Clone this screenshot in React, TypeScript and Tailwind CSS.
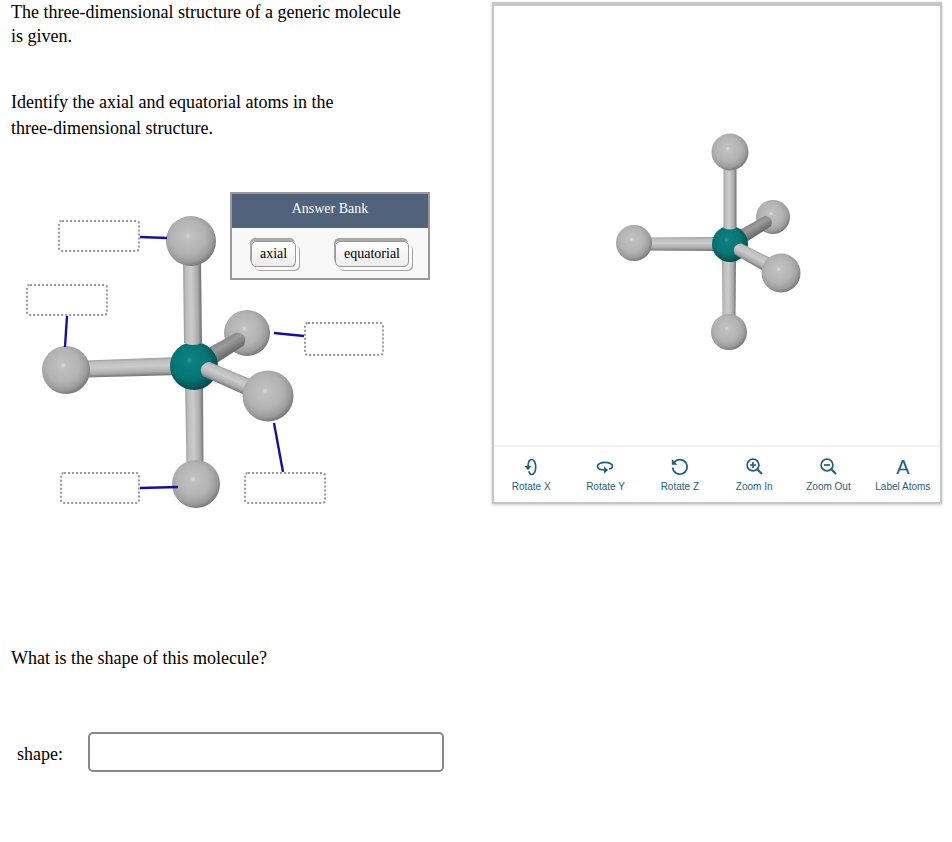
import React from "react";

type Point = [number, number];

function Gradients() {
  return (
    <svg width="0" height="0" className="absolute" aria-hidden="true">
      <defs>
        <radialGradient id="atom" cx="0.44" cy="0.42" r="0.62" fx="0.44" fy="0.4">
          <stop offset="0" stopColor="#dedede" />
          <stop offset="0.1" stopColor="#c0c0c0" />
          <stop offset="0.55" stopColor="#b3b3b3" />
          <stop offset="0.8" stopColor="#9c9c9c" />
          <stop offset="1" stopColor="#6c6c6c" />
        </radialGradient>
        <radialGradient id="core" cx="0.44" cy="0.42" r="0.62" fx="0.4" fy="0.38">
          <stop offset="0" stopColor="#2f9c9c" />
          <stop offset="0.12" stopColor="#0b8080" />
          <stop offset="0.6" stopColor="#067474" />
          <stop offset="1" stopColor="#034747" />
        </radialGradient>
        <linearGradient id="bond" x1="0" y1="0" x2="0" y2="1">
          <stop offset="0" stopColor="#9a9a9a" />
          <stop offset="0.15" stopColor="#bebebe" />
          <stop offset="0.45" stopColor="#cbcbcb" />
          <stop offset="0.78" stopColor="#ababab" />
          <stop offset="1" stopColor="#707070" />
        </linearGradient>
        <linearGradient id="bondDark" x1="0" y1="0" x2="0" y2="1">
          <stop offset="0" stopColor="#858585" />
          <stop offset="0.35" stopColor="#9c9c9c" />
          <stop offset="1" stopColor="#626262" />
        </linearGradient>
      </defs>
    </svg>
  );
}

function Atom({ at, r, core }: { at: Point; r: number; core?: boolean }) {
  return <circle cx={at[0]} cy={at[1]} r={r} fill={core ? "url(#core)" : "url(#atom)"} />;
}

function Bond({ from, to, w1, w2, dark, cap = 0 }: { from: Point; to: Point; w1: number; w2: number; dark?: boolean; cap?: number }) {
  const dx = to[0] - from[0];
  const dy = to[1] - from[1];
  const len = Math.hypot(dx, dy);
  const angle = (Math.atan2(dy, dx) * 180) / Math.PI;
  const a = w1 / 2;
  const b = w2 / 2;
  return (
    <path
      transform={`translate(${from[0]} ${from[1]}) rotate(${angle})`}
      d={`M0 ${-a} L${len} ${-b} Q${len + cap} 0 ${len} ${b} L0 ${a} Q${-cap} 0 0 ${-a}Z`}
      fill={dark ? "url(#bondDark)" : "url(#bond)"}
    />
  );
}

function LabelledMolecule() {
  return (
    <svg width="440" height="340" viewBox="0 180 440 340" className="absolute left-0 top-0" role="img" aria-label="Molecule with five outer atoms">
      <Atom at={[247, 333]} r={23} />
      <Bond from={[200, 363]} to={[240, 339]} w1={18} w2={15} dark cap={10} />
      <Bond from={[86, 369]} to={[180, 366]} w1={17} w2={18} />
      <Bond from={[195, 466]} to={[194, 380]} w1={17} w2={18} />
      <Atom at={[194, 366]} r={24} core />
      <Bond from={[193, 343]} to={[192, 260]} w1={18} w2={18} cap={4} />
      <Atom at={[191, 241]} r={25} />
      <Atom at={[66, 370]} r={24} />
      <Atom at={[196, 484]} r={24} />
      <Bond from={[206, 369]} to={[250, 388]} w1={16} w2={17} cap={10} />
      <Atom at={[268, 396]} r={25.5} />
      <g stroke="#160fa6" strokeWidth="2.4">
        <path d="M140 237L167 238" />
        <path d="M67 316L65 347" />
        <path d="M274 333L304 336" />
        <path d="M140 488L178 487" />
        <path d="M274 423L283 472" />
      </g>
    </svg>
  );
}

function ViewerMolecule() {
  return (
    <svg viewBox="494 6 446 439" className="h-[439px] w-full" role="img" aria-label="Rotatable molecule model">
      <Atom at={[773, 217]} r={17} />
      <Bond from={[738, 239]} to={[768, 221]} w1={14} w2={12} dark cap={7} />
      <Bond from={[648, 244]} to={[715, 244]} w1={13} w2={14} />
      <Bond from={[729, 318]} to={[729, 258]} w1={13} w2={14} />
      <Atom at={[730, 244]} r={18} core />
      <Bond from={[730, 228]} to={[730, 165]} w1={13} w2={13} cap={3} />
      <Atom at={[730, 152]} r={18.5} />
      <Atom at={[634, 243]} r={18} />
      <Atom at={[729, 332]} r={18} />
      <Bond from={[738, 249]} to={[768, 265]} w1={13} w2={15} cap={8} />
      <Atom at={[781, 273]} r={19.5} />
    </svg>
  );
}

function Slot({ place, label }: { place: string; label: string }) {
  return <button type="button" aria-label={label} className={`absolute rounded border-2 border-dotted border-[#999] bg-white ${place}`} />;
}

function Tile({ children }: { children: React.ReactNode }) {
  return (
    <button
      type="button"
      className="h-[26px] rounded-[5px] border border-[#999] bg-linear-to-b from-white to-[#ececec] px-2 text-sm leading-5 shadow-[3px_3px_0_0_#fafafa,4px_4px_0_0_#a5a5a5,-1px_-3px_0_0_#a9a9a9]"
    >
      {children}
    </button>
  );
}

function RotateY({ className = "" }: { className?: string }) {
  return (
    <svg width="20" height="20" viewBox="0 0 20 20" className={className} fill="none" stroke="currentColor" strokeWidth="1.7" aria-hidden="true">
      <path d="M14.2 12.2C16.3 11.5 17.5 10.4 17.5 9.2C17.5 7 14.2 5.3 10 5.3S2.5 7 2.5 9.2C2.5 11.4 5.6 13 10 13" />
      <path d="M9 9.4L13.2 13L9 16.4Z" fill="currentColor" stroke="none" />
    </svg>
  );
}

function RotateZ() {
  return (
    <svg width="20" height="20" viewBox="0 0 20 20" fill="none" stroke="currentColor" strokeWidth="1.7" aria-hidden="true">
      <path d="M2.6 10.5a7.3 7.3 0 1 0 2.1-5.8L3.2 6.2" />
      <path d="M1.8 2v5.8h5.8Z" fill="currentColor" stroke="none" />
    </svg>
  );
}

function Magnifier({ plus }: { plus?: boolean }) {
  return (
    <svg width="20" height="20" viewBox="0 0 20 20" fill="none" stroke="currentColor" strokeWidth="1.7" aria-hidden="true">
      <circle cx="9" cy="8" r="5.9" />
      <path d="M13.2 12.2L18 17" strokeWidth="2" />
      <path d={plus ? "M6 8h6M9 5v6" : "M6 8h6"} />
    </svg>
  );
}

const tools = [
  { label: "Rotate X", icon: <RotateY className="rotate-90" /> },
  { label: "Rotate Y", icon: <RotateY /> },
  { label: "Rotate Z", icon: <RotateZ /> },
  { label: "Zoom In", icon: <Magnifier plus /> },
  { label: "Zoom Out", icon: <Magnifier /> },
  { label: "Label Atoms", icon: <span className="text-xl leading-5">A</span> },
];

export default function App() {
  return (
    <main className="flex items-start bg-white font-['Liberation_Serif',serif] text-lg text-black">
      <Gradients />
      <section className="w-[492px] shrink-0">
        <p className="w-[410px] pl-[11px] leading-6">The three-dimensional structure of a generic molecule is given.</p>
        <p className="mt-[41px] w-[360px] pl-[11px] leading-[26px]">Identify the axial and equatorial atoms in the three-dimensional structure.</p>
        <div className="relative mt-[39px] h-[340px] pt-3">
          <LabelledMolecule />
          <Slot label="Top atom" place="left-[58px] top-[40px] h-8 w-[82px]" />
          <Slot label="Left atom" place="left-[26px] top-[104px] h-8 w-[82px]" />
          <Slot label="Back atom" place="left-[304px] top-[142px] h-[34px] w-[80px]" />
          <Slot label="Bottom atom" place="left-[60px] top-[292px] h-8 w-[80px]" />
          <Slot label="Front atom" place="left-[244px] top-[292px] h-8 w-[82px]" />
          <div className="relative ml-[230px] w-[200px] border-2 border-[#999] bg-[#f8f8f8] text-sm">
            <h2 className="bg-[#50627c] pb-2 pt-1 text-center leading-[22px] text-white">Answer Bank</h2>
            <div className="flex h-[50px] items-center justify-between px-[19px] pt-0.5">
              <Tile>axial</Tile>
              <Tile>equatorial</Tile>
            </div>
          </div>
        </div>
        <p className="mt-[126px] pl-[11px] leading-6">What is the shape of this molecule?</p>
        <div className="mt-[62px] flex items-center pl-[17px]">
          <label htmlFor="shape" className="w-[71px] pt-1">shape:</label>
          <input id="shape" type="text" className="h-10 w-[356px] rounded-[5px] border-2 border-[#888] px-2 outline-none" />
        </div>
      </section>
      <section className="mr-2.5 mt-0.5 flex-1 border-2 border-t-4 border-[#c6c6c6] bg-white shadow-[0_1px_3px_#ccc]">
        <ViewerMolecule />
        <div className="grid grid-cols-6 border-t-2 border-[#f3f3f3] font-['Liberation_Sans',sans-serif] text-[#1f6176]">
          {tools.map((tool) => (
            <button key={tool.label} type="button" className="flex h-[55px] flex-col items-center whitespace-nowrap pt-2">
              <span className="flex h-6 items-center">{tool.icon}</span>
              <span className="text-[10px] leading-4">{tool.label}</span>
            </button>
          ))}
        </div>
      </section>
    </main>
  );
}
